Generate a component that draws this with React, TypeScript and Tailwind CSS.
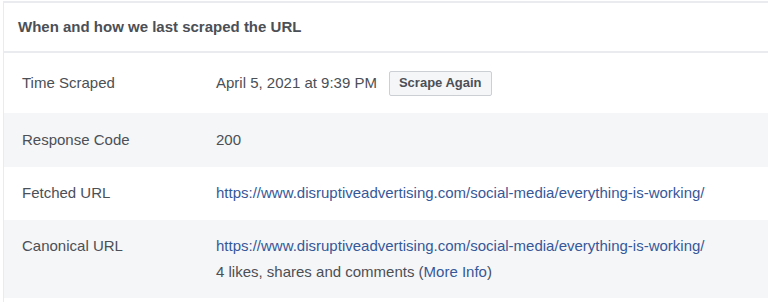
const url = 'https://www.disruptiveadvertising.com/social-media/everything-is-working/';

export default function App() {
  return (
    <div className="w-[768px] h-[302px] bg-white pl-[3px] pt-[1px] overflow-hidden font-['Liberation_Sans',Arial,sans-serif] text-[15px] text-[#4b4f56]">
      <div className="border-l border-t-2 border-[#e9ebee] h-full">
        <div className="h-[50px] flex items-center px-[14px] border-b-2 border-[#e9ebee] font-bold text-[#4b4f56]">
          When and how we last scraped the URL
        </div>

        <div className="h-[60px] flex items-center bg-white">
          <div className="w-[212px] pl-[18px]">Time Scraped</div>
          <div className="flex items-center">
            <span>April 5, 2021 at 9:39 PM</span>
            <button className="ml-[12px] h-[25px] px-[9px] bg-[#f5f6f7] border border-[#ccd0d5] rounded-[2px] text-[13px] font-bold text-[#4b4f56]">
              Scrape Again
            </button>
          </div>
        </div>

        <div className="h-[54px] flex items-center bg-[#f5f6f7]">
          <div className="w-[212px] pl-[18px]">Response Code</div>
          <div>200</div>
        </div>

        <div className="h-[53px] flex items-center bg-white">
          <div className="w-[212px] pl-[18px]">Fetched URL</div>
          <a className="text-[#365899]">{url}</a>
        </div>

        <div className="h-[78px] flex bg-[#f5f6f7] pt-[17px]">
          <div className="w-[212px] pl-[18px] leading-[18px]">Canonical URL</div>
          <div className="flex flex-col gap-[8px] leading-[18px]">
            <a className="text-[#365899]">{url}</a>
            <div>
              4 likes, shares and comments (<a className="text-[#365899]">More Info</a>)
            </div>
          </div>
        </div>
      </div>
    </div>
  );
}
